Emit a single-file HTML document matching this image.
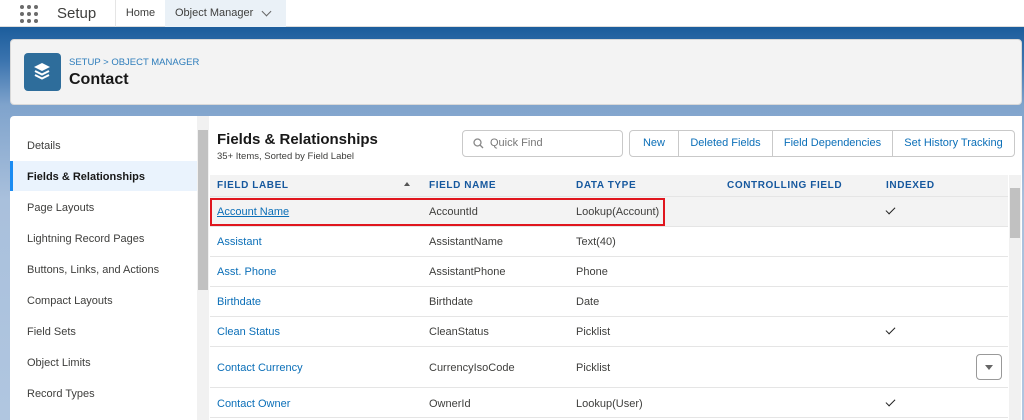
<!DOCTYPE html>
<html><head><meta charset="utf-8"><style>
*{margin:0;padding:0;box-sizing:border-box}
html,body{width:1024px;height:420px;overflow:hidden}
body{font-family:"Liberation Sans",sans-serif;font-size:11px;color:#181818;background:linear-gradient(#1c5d9c 27px,#3a73ae 60px,#7fa3cc 105px,#a9c0dc 200px,#b0c6e0 420px);position:relative}
.top{position:absolute;left:0;top:0;width:1024px;height:27px;background:#fff;border-bottom:1px solid #ddd}
.abs{position:absolute}
.card{left:10px;top:39px;width:1012px;height:66px;background:#f3f3f3;border-radius:4px;border:1px solid #d8d8d8}
.left{left:10px;top:116px;width:187px;height:304px;background:#fff;border-radius:4px 0 0 0}
.nav{position:absolute;left:27px;color:#3e3e3c;font-size:11px}
.main{left:209px;top:116px;width:813px;height:304px;background:#fff}
.btn{position:absolute;top:130px;height:27px;border:1px solid #c9c9c9;color:#0b6fb8;font-size:11px;line-height:25px;text-align:center}
.hd{position:absolute;top:180px;font-size:10px;font-weight:bold;letter-spacing:0.6px;color:#16589e}
.row{position:absolute;left:210px;width:798px;border-bottom:1px solid #e5e5e5}
.c{position:absolute;font-size:11px;color:#3e3e3c}
.lk{color:#0b6fb8}
.chk{position:absolute;left:886px;width:9px;height:5px;border-left:1.5px solid #222;border-bottom:1.5px solid #222;transform:rotate(-45deg)}
</style></head><body>
<div class="top"></div>
<svg class="abs" style="left:19px;top:4px" width="20" height="20"><g fill="#6b6b6b"><circle cx="3" cy="3" r="2"/><circle cx="10" cy="3" r="2"/><circle cx="17" cy="3" r="2"/><circle cx="3" cy="10" r="2"/><circle cx="10" cy="10" r="2"/><circle cx="17" cy="10" r="2"/><circle cx="3" cy="17" r="2"/><circle cx="10" cy="17" r="2"/><circle cx="17" cy="17" r="2"/></g></svg>
<div class="abs" style="left:57px;top:5px;font-size:15px;color:#3e3e3c">Setup</div>
<div class="abs" style="left:115px;top:0;width:50px;height:27px;border-left:1px solid #e5e5e5;font-size:11px;line-height:26px;text-align:center;color:#3e3e3c">Home</div>
<div class="abs" style="left:165px;top:0;width:121px;height:27px;background:#eaf1f7;font-size:11px;line-height:26px;padding-left:10px;color:#3e3e3c">Object Manager <span style="position:absolute;left:98px;top:8px;width:7px;height:7px;border-right:1.5px solid #666;border-bottom:1.5px solid #666;transform:rotate(45deg)"></span></div>
<div class="abs card"></div>
<div class="abs" style="left:24px;top:53px;width:37px;height:38px;background:#2e6d9b;border-radius:4px"></div>
<svg class="abs" style="left:33px;top:62px" width="18" height="20" viewBox="0 0 18 20"><path d="M9 1L17 5 9 9 1 5Z" fill="#fff"/><path d="M2 9L9 12.5 16 9M2 13L9 16.5 16 13" stroke="#fff" stroke-width="2" fill="none"/></svg>
<div class="abs" style="left:69px;top:57px;font-size:9.5px;color:#2e7dbb">SETUP &gt; OBJECT MANAGER</div>
<div class="abs" style="left:69px;top:71px;font-size:16px;font-weight:bold;color:#181818">Contact</div>
<div class="abs left"></div>
<div class="abs" style="left:10px;top:161px;width:187px;height:30px;background:#eaf3fd;border-left:3px solid #1b8cf2"></div>
<div class="nav" style="top:140px">Details</div>
<div class="nav" style="top:171px;font-weight:bold;color:#181818">Fields &amp; Relationships</div>
<div class="nav" style="top:202px">Page Layouts</div>
<div class="nav" style="top:233px">Lightning Record Pages</div>
<div class="nav" style="top:264px">Buttons, Links, and Actions</div>
<div class="nav" style="top:295px">Compact Layouts</div>
<div class="nav" style="top:326px">Field Sets</div>
<div class="nav" style="top:357px">Object Limits</div>
<div class="nav" style="top:388px">Record Types</div>
<div class="abs" style="left:197px;top:116px;width:12px;height:304px;background:#f1f1f1"></div>
<div class="abs" style="left:198px;top:130px;width:10px;height:160px;background:#c1c1c1"></div>
<div class="abs main"></div>
<div class="abs" style="left:217px;top:131px;font-size:15px;font-weight:bold">Fields &amp; Relationships</div>
<div class="abs" style="left:217px;top:151px;font-size:9.5px;color:#3e3e3c">35+ Items, Sorted by Field Label</div>
<div class="abs" style="left:462px;top:130px;width:161px;height:27px;border:1px solid #c9c9c9;border-radius:4px"></div>
<svg class="abs" style="left:473px;top:138px" width="11" height="11"><circle cx="4.5" cy="4.5" r="3.5" stroke="#888" stroke-width="1.3" fill="none"/><path d="M7 7L10 10" stroke="#888" stroke-width="1.3"/></svg>
<div class="abs" style="left:490px;top:137px;font-size:11px;color:#777">Quick Find</div>
<div class="btn" style="left:629px;width:50px;border-radius:4px 0 0 4px">New</div>
<div class="btn" style="left:678px;width:95px">Deleted Fields</div>
<div class="btn" style="left:772px;width:121px">Field Dependencies</div>
<div class="btn" style="left:892px;width:123px;border-radius:0 4px 4px 0">Set History Tracking</div>
<div class="abs" style="left:210px;top:175px;width:798px;height:22px;background:#f3f3f3;border-bottom:1px solid #e5e5e5"></div>
<div class="hd" style="left:217px">FIELD LABEL</div>
<div class="abs" style="left:404px;top:182px;border:3.5px solid transparent;border-bottom:4px solid #555;border-top:0"></div>
<div class="hd" style="left:429px">FIELD NAME</div>
<div class="hd" style="left:576px">DATA TYPE</div>
<div class="hd" style="left:727px">CONTROLLING FIELD</div>
<div class="hd" style="left:886px">INDEXED</div>
<div class="row" style="top:197px;height:30px;background:#f3f3f3"></div>
<div class="row" style="top:227px;height:30px"></div>
<div class="row" style="top:257px;height:30px"></div>
<div class="row" style="top:287px;height:30px"></div>
<div class="row" style="top:317px;height:30px"></div>
<div class="row" style="top:347px;height:41px"></div>
<div class="row" style="top:388px;height:30px"></div>
<div class="abs" style="left:210px;top:198px;width:455px;height:28px;border:2px solid #e0161e"></div>
<div class="c lk" style="left:217px;top:206px;text-decoration:underline">Account Name</div><div class="c" style="left:429px;top:206px">AccountId</div><div class="c" style="left:576px;top:206px">Lookup(Account)</div><div class="chk" style="top:207px"></div>
<div class="c lk" style="left:217px;top:236px">Assistant</div><div class="c" style="left:429px;top:236px">AssistantName</div><div class="c" style="left:576px;top:236px">Text(40)</div>
<div class="c lk" style="left:217px;top:266px">Asst. Phone</div><div class="c" style="left:429px;top:266px">AssistantPhone</div><div class="c" style="left:576px;top:266px">Phone</div>
<div class="c lk" style="left:217px;top:296px">Birthdate</div><div class="c" style="left:429px;top:296px">Birthdate</div><div class="c" style="left:576px;top:296px">Date</div>
<div class="c lk" style="left:217px;top:326px">Clean Status</div><div class="c" style="left:429px;top:326px">CleanStatus</div><div class="c" style="left:576px;top:326px">Picklist</div><div class="chk" style="top:327px"></div>
<div class="c lk" style="left:217px;top:362px">Contact Currency</div><div class="c" style="left:429px;top:362px">CurrencyIsoCode</div><div class="c" style="left:576px;top:362px">Picklist</div>
<div class="abs" style="left:976px;top:354px;width:26px;height:26px;border:1px solid #999;border-radius:4px"></div>
<div class="abs" style="left:985px;top:365px;border:4px solid transparent;border-top:5px solid #666;border-bottom:0"></div>
<div class="c lk" style="left:217px;top:398px">Contact Owner</div><div class="c" style="left:429px;top:398px">OwnerId</div><div class="c" style="left:576px;top:398px">Lookup(User)</div><div class="chk" style="top:399px"></div>
<div class="abs" style="left:1009px;top:175px;width:12px;height:245px;background:#f1f1f1"></div>
<div class="abs" style="left:1010px;top:188px;width:10px;height:50px;background:#c1c1c1"></div>
</body></html>
